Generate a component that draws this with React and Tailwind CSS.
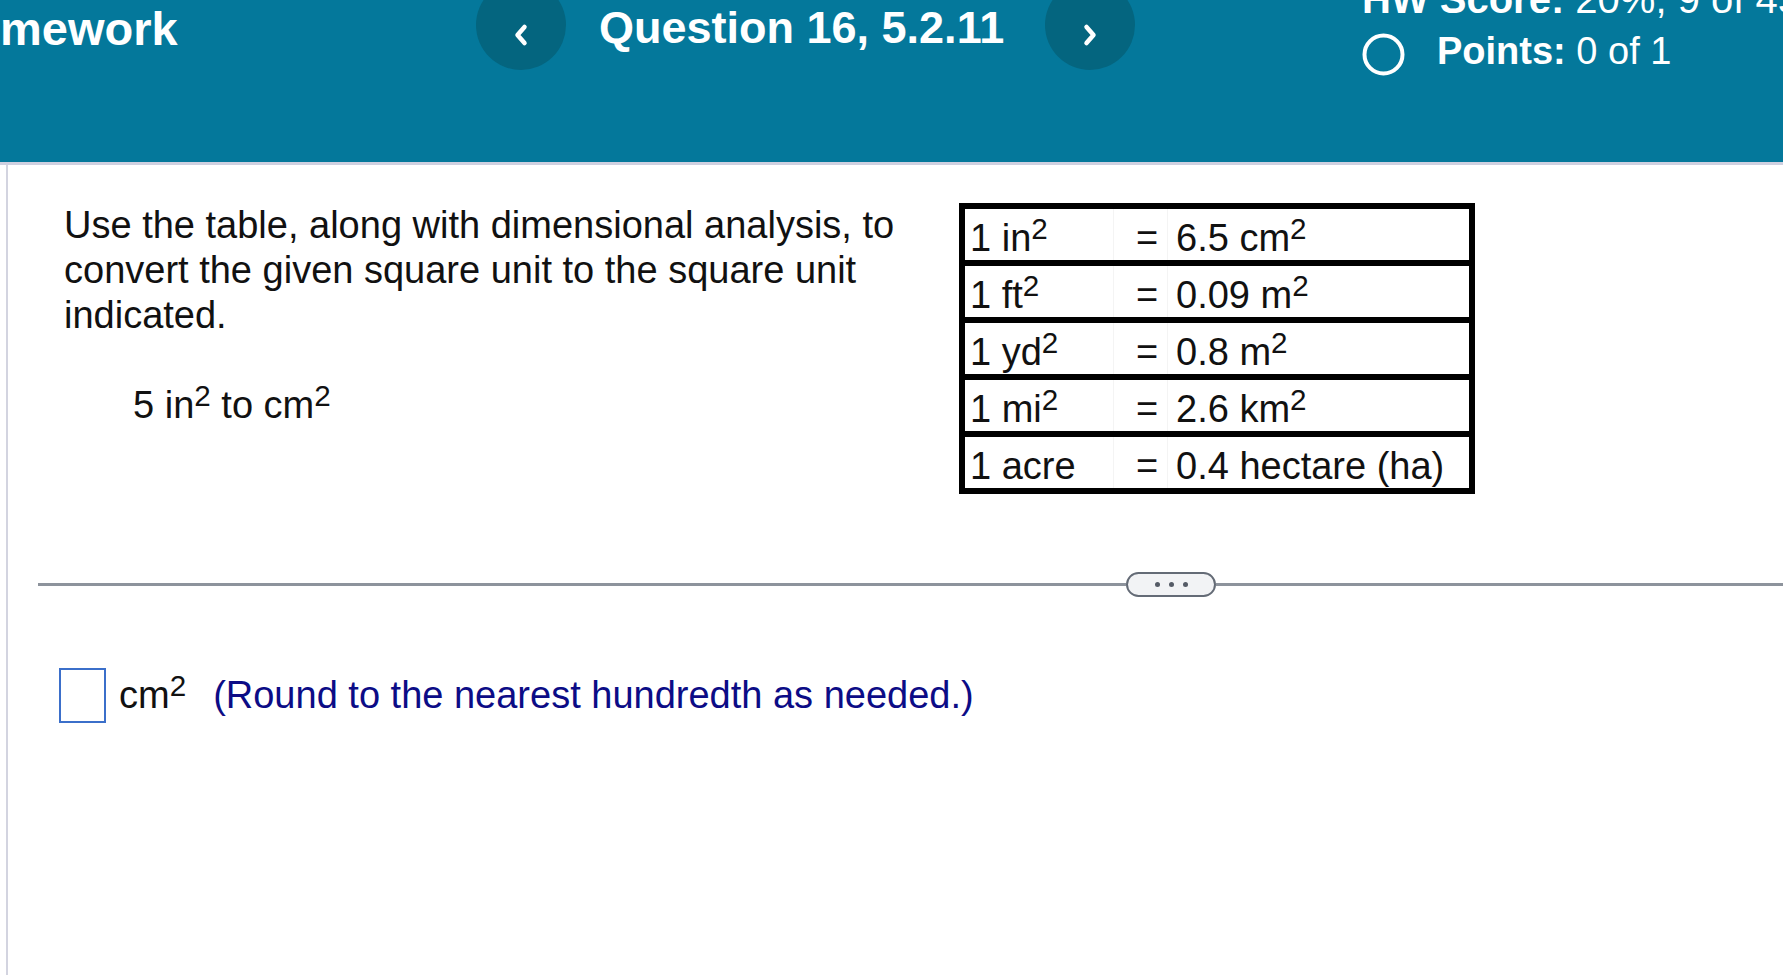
import React from 'react';

const rows = [
  { a: '1 in', sa: true, b: '6.5 cm', sb: true },
  { a: '1 ft', sa: true, b: '0.09 m', sb: true },
  { a: '1 yd', sa: true, b: '0.8 m', sb: true },
  { a: '1 mi', sa: true, b: '2.6 km', sb: true },
  { a: '1 acre', sa: false, b: '0.4 hectare (ha)', sb: false },
];

function Sq() {
  return <sup className="text-[78%] top-[-0.42em]">2</sup>;
}

function Chevron({ dir }) {
  return (
    <svg width="16" height="24" viewBox="0 0 16 24" fill="none">
      {dir === 'left' ? (
        <polyline points="11.5,4 4.5,12 11.5,20" stroke="white" strokeWidth="4.5" strokeLinecap="round" strokeLinejoin="round" />
      ) : (
        <polyline points="4.5,4 11.5,12 4.5,20" stroke="white" strokeWidth="4.5" strokeLinecap="round" strokeLinejoin="round" />
      )}
    </svg>
  );
}

function ConversionTable() {
  return (
    <div className="w-[516px] shrink-0 border-[6px] border-black bg-white">
      {rows.map((r, i) => (
        <div key={i} className={`flex text-[38px] leading-[43px] ${i > 0 ? 'h-[57px] border-t-[6px] border-black' : 'h-[51px]'}`}>
          <div className="w-[148px] pl-[5px] pt-[8px]">
            {r.a}
            {r.sa && <Sq />}
          </div>
          <div className="w-[54px] pl-[22px] pt-[8px] border-l border-[#f4f4f4]">=</div>
          <div className="flex-1 pl-[8px] pt-[8px] border-l border-[#f4f4f4]">
            {r.b}
            {r.sb && <Sq />}
          </div>
        </div>
      ))}
    </div>
  );
}

export default function App() {
  return (
    <div className="w-[1783px] h-[975px] overflow-hidden bg-white font-['Liberation_Sans',Arial,sans-serif]">
      {/* top bar */}
      <header className="h-[165px] bg-[#04789b] border-b-[3px] border-[#cfd0e0] flex items-start overflow-hidden whitespace-nowrap text-white">
        <div className="w-[476px] shrink-0 pt-[5px] text-[47px] leading-[47px] font-bold">mework</div>
        <button className="w-[90px] h-[90px] shrink-0 -mt-[20px] pt-[20px] rounded-full bg-[#04657f] flex items-center justify-center">
          <Chevron dir="left" />
        </button>
        <div className="w-[446px] shrink-0 ml-[33px] pt-[4px] text-[45px] leading-[47px] font-bold">
          Question 16, 5.2.11
        </div>
        <button className="w-[90px] h-[90px] shrink-0 -mt-[20px] pt-[20px] rounded-full bg-[#04657f] flex items-center justify-center">
          <Chevron dir="right" />
        </button>
        <div className="ml-[227px] -mt-[23px] flex flex-col">
          <div className="text-[40px] leading-[45px]">
            <span className="font-bold">HW Score:</span> 20%, 9 of 45 points
          </div>
          <div className="mt-[7px] flex items-start">
            <svg width="43" height="43" viewBox="0 0 43 43" className="mt-[4px] shrink-0">
              <circle cx="21.5" cy="21.5" r="19" fill="none" stroke="white" strokeWidth="4" />
            </svg>
            <div className="ml-[32px] text-[38px] leading-[45px]">
              <span className="font-bold">Points:</span> 0 of 1
            </div>
          </div>
        </div>
      </header>

      {/* question body */}
      <div className="ml-[6px] h-[810px] border-l-[2px] border-[#d3d4e0] text-[#111]">
        <div className="flex items-start pt-[38px]">
          <div className="w-[951px] shrink-0 pl-[56px]">
            <p className="text-[38px] leading-[45px]">
              Use the table, along with dimensional analysis, to convert the given square unit to the square unit indicated.
            </p>
            <p className="mt-[45px] pl-[69px] text-[38px] leading-[45px]">
              5 in<Sq /> to cm<Sq />
            </p>
          </div>
          <ConversionTable />
        </div>

        <div className="mt-[78px] ml-[30px] flex items-center">
          <div className="w-[1088px] h-[3px] bg-[#8d939c]" />
          <div className="w-[90px] h-[25px] shrink-0 rounded-full border-2 border-[#646b76] bg-[#f2f3f5] flex items-center justify-center gap-[9px]">
            <span className="w-[5px] h-[5px] rounded-full bg-[#555b66]" />
            <span className="w-[5px] h-[5px] rounded-full bg-[#555b66]" />
            <span className="w-[5px] h-[5px] rounded-full bg-[#555b66]" />
          </div>
          <div className="flex-1 h-[3px] bg-[#8d939c]" />
        </div>

        <div className="mt-[71px] ml-[51px] flex items-start text-[38px] leading-[45px] whitespace-nowrap">
          <div className="w-[47px] h-[55px] shrink-0 border-2 border-[#3b6fca] bg-white" />
          <span className="mt-[5px] ml-[13px]">
            cm<Sq />
          </span>
          <span className="mt-[5px] ml-[27px] text-[#0c0c86]">(Round to the nearest hundredth as needed.)</span>
        </div>
      </div>
    </div>
  );
}
